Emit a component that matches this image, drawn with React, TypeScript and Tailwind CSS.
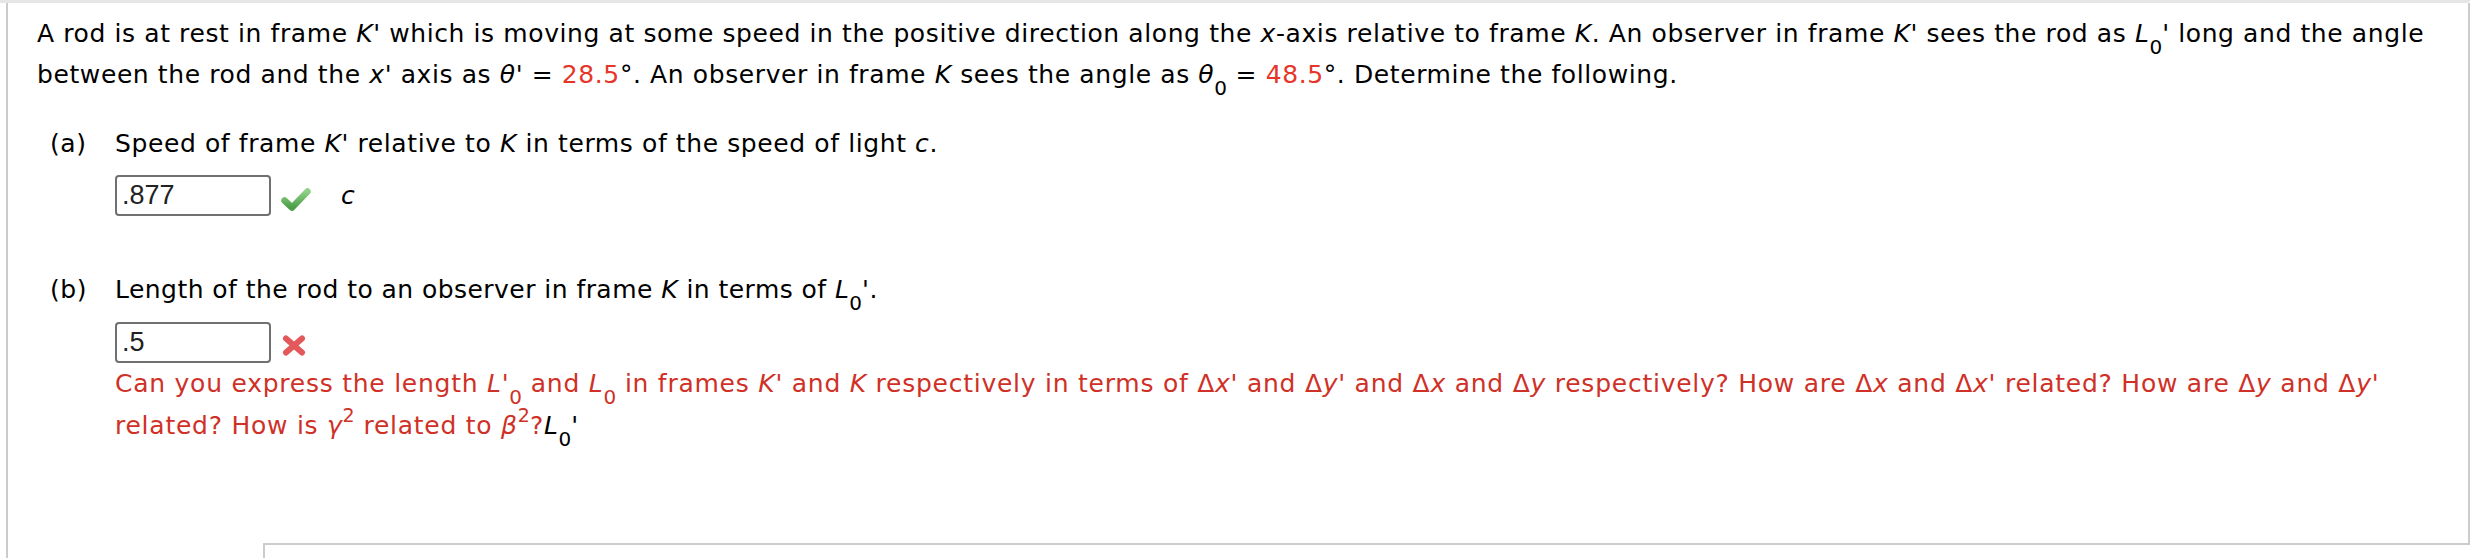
import React from "react";

const Sub = ({ children }: { children: React.ReactNode }) => (
  <span className="relative top-[12px] text-[20px] leading-none not-italic tracking-normal">{children}</span>
);
const Sup = ({ children }: { children: React.ReactNode }) => (
  <span className="relative top-[-12px] text-[19px] leading-none not-italic tracking-normal">{children}</span>
);
const Red = ({ children }: { children: React.ReactNode }) => (
  <span className="text-[#e5362a]">{children}</span>
);

const Check = () => (
  <svg width="30" height="24" viewBox="0 0 30 24" className="mt-[12px]">
    <defs>
      <linearGradient id="cg" x1="0" y1="0" x2="0" y2="1">
        <stop offset="0" stopColor="#8fd088" />
        <stop offset="1" stopColor="#4c9e47" />
      </linearGradient>
    </defs>
    <path d="M3.5 13.5 L11 20.5 L26.5 4.5" fill="none" stroke="url(#cg)" strokeWidth="6.5" strokeLinecap="round" strokeLinejoin="round" />
  </svg>
);

const Cross = () => (
  <svg width="26" height="23" viewBox="0 0 26 23" className="mt-[12px]">
    <path d="M5 4.5 L21 18.5 M21 4.5 L5 18.5" fill="none" stroke="#e3585a" strokeWidth="6" strokeLinecap="round" />
  </svg>
);

const Box = ({ value }: { value: string }) => (
  <div
    className="w-[156px] h-[41px] border-2 border-[#707070] rounded-[4px] bg-white flex items-center pl-[5px] text-[27px] text-[#222] leading-none tracking-normal"
    style={{ fontFamily: '"Liberation Sans", Arial, sans-serif' }}
  >
    {value}
  </div>
);

export default function App() {
  return (
    <div
      className="w-[2488px] h-[558px] overflow-hidden bg-white text-black flex flex-col"
      style={{ fontFamily: '"DejaVu Sans", Verdana, sans-serif' }}
    >
      <div className="h-[3px] w-[2470px] bg-[#e6e6e6] rounded-br-[3px] shrink-0" />
      <div className="ml-[6px] w-[2464px] border-l-2 border-[#cccccc] flex flex-col flex-1">
        <div className="h-[540px] shrink-0 border-r-2 border-[#cccccc] pl-[29px] pt-[10px] text-[25px] tracking-[0.6px] leading-[41px]">
          <div className="whitespace-nowrap">
            A rod is at rest in frame <i>K'</i> which is moving at some speed in the positive direction along the{" "}
            <i>x</i>-axis relative to frame <i>K</i>. An observer in frame <i>K'</i> sees the rod as <i>L</i>
            <Sub>0</Sub>
            <i>'</i> long and the angle
          </div>
          <div className="whitespace-nowrap">
            between the rod and the <i>x'</i> axis as <i>θ'</i> = <Red>28.5</Red>°. An observer in frame <i>K</i> sees the
            angle as <i>θ</i>
            <Sub>0</Sub> = <Red>48.5</Red>°. Determine the following.
          </div>

          <div className="mt-[28px] ml-[13px] flex">
            <div className="w-[65px] shrink-0">(a)</div>
            <div className="flex flex-col">
              <div className="whitespace-nowrap">
                Speed of frame <i>K'</i> relative to <i>K</i> in terms of the speed of light <i>c</i>.
              </div>
              <div className="mt-[11px] flex items-start">
                <Box value=".877" />
                <div className="ml-[10px]">
                  <Check />
                </div>
                <div className="ml-[30px] h-[41px] flex items-center">
                  <i>c</i>
                </div>
              </div>
            </div>
          </div>

          <div className="mt-[53px] ml-[13px] flex">
            <div className="w-[65px] shrink-0">(b)</div>
            <div className="flex flex-col">
              <div className="whitespace-nowrap tracking-[0.45px]">
                Length of the rod to an observer in frame <i>K</i> in terms of <i>L</i>
                <Sub>0</Sub>
                <i>'</i>.
              </div>
              <div className="mt-[12px] flex items-start">
                <Box value=".5" />
                <div className="ml-[10px]">
                  <Cross />
                </div>
              </div>
              <div className="text-[#cf3127] leading-[42px] tracking-[0.75px]">
                <div className="whitespace-nowrap">
                  Can you express the length <i>L'</i>
                  <Sub>0</Sub> and <i>L</i>
                  <Sub>0</Sub> in frames <i>K'</i> and <i>K</i> respectively in terms of Δ<i>x'</i> and Δ<i>y'</i> and Δ
                  <i>x</i> and Δ<i>y</i> respectively? How are Δ<i>x</i> and Δ<i>x'</i> related? How are Δ<i>y</i> and Δ
                  <i>y'</i>
                </div>
                <div className="whitespace-nowrap">
                  related? How is <i>γ</i>
                  <Sup>2</Sup> related to <i>β</i>
                  <Sup>2</Sup>?
                  <span className="text-black">
                    <i>L</i>
                    <Sub>0</Sub>'
                  </span>
                </div>
              </div>
            </div>
          </div>
        </div>
        <div className="flex flex-1">
          <div className="w-[255px] shrink-0" />
          <div className="flex-1 border-t-2 border-l-2 border-[#cccccc]" />
        </div>
      </div>
    </div>
  );
}
